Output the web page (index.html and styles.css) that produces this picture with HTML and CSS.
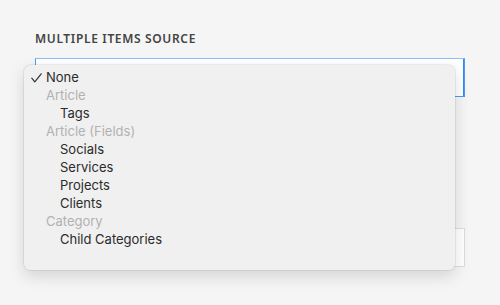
FILE: index.html
```html
<!DOCTYPE html>
<html lang="en">
<head>
  <meta charset="UTF-8">
  <title>Multiple Items Source</title>
  <link rel="stylesheet" href="styles.css">
</head>
<body>
  <div class="form">
    <div class="field">
      <label class="field-label">Multiple Items Source</label>
      <div class="select select-focus"></div>
    </div>
    <div class="field field-next">
      <div class="select"></div>
    </div>
  </div>

  <ul class="menu">
    <li class="option selected">
      <svg class="check" width="11" height="10" viewBox="0 0 11 10"><polyline points="0.8,5.2 3.8,8.8 10.2,0.8" fill="none" stroke="#333" stroke-width="1.2" stroke-linecap="round" stroke-linejoin="round"/></svg>None
    </li>
    <li class="group">Article</li>
    <li class="option child">Tags</li>
    <li class="group">Article (Fields)</li>
    <li class="option child">Socials</li>
    <li class="option child">Services</li>
    <li class="option child">Projects</li>
    <li class="option child">Clients</li>
    <li class="group">Category</li>
    <li class="option child">Child Categories</li>
  </ul>
</body>
</html>
```

FILE: styles.css
```css
body {
  margin: 0;
  background: #f5f5f5;
  font-family: Inter, "Noto Sans", sans-serif;
  height: 305px;
  overflow: hidden;
}
.form {
  padding: 31px 35px 0 35px;
  width: 430px;
}
.field-label {
  display: block;
  font-family: "Noto Sans", sans-serif;
  font-weight: 600;
  font-size: 12px;
  letter-spacing: 0.65px;
  text-transform: uppercase;
  color: #444;
  line-height: 16px;
  margin-bottom: 11px;
}
.select {
  height: 37px;
  border: 1px solid #dcdcdc;
  background: #fff;
}
.select-focus {
  border-color: #4b9bf3;
  border-top-color: #8dbdf2;
  box-shadow: inset -1px 0 0 #2f8af0;
}
.field-next {
  margin-top: 131px;
}
.menu {
  position: absolute;
  left: 24px;
  top: 65px;
  width: 431px;
  height: 205px;
  box-sizing: border-box;
  margin: 0;
  padding: 3px 0 0 0;
  list-style: none;
  background: #f0f0f0;
  border-radius: 6px;
  box-shadow: 0 0 0 0.5px rgba(0,0,0,0.12), 0 6px 16px rgba(0,0,0,0.14);
  font-size: 13px;
}
.menu li {
  height: 18px;
  line-height: 18px;
  padding-left: 22px;
  white-space: nowrap;
}
.option {
  color: #2b2b2b;
}
.group {
  color: #b2b2b2;
}
.child {
  padding-left: 36px !important;
}
.selected {
  position: relative;
}
.check {
  position: absolute;
  left: 7px;
  top: 5px;
}
```
